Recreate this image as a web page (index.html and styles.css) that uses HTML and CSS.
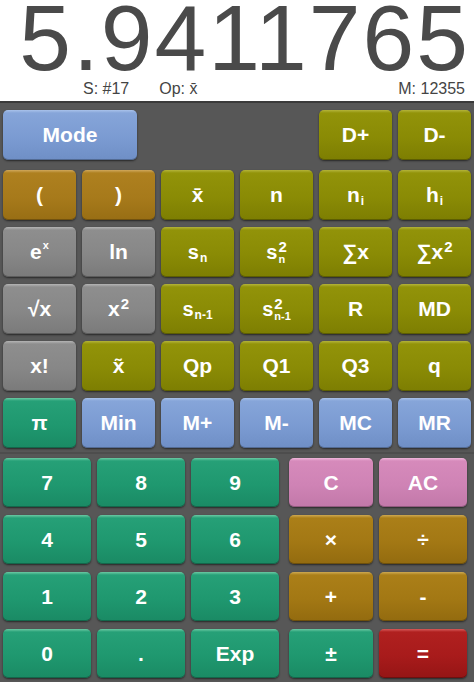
FILE: index.html
```html
<!DOCTYPE html>
<html>
<head>
<meta charset="utf-8">
<link rel="stylesheet" href="styles.css">
</head>
<body>
<div class="display">
  <div class="value">5.9411765</div>
  <div class="status">
    <span class="st-s">S: #17</span>
    <span class="st-op">Op: x̄</span>
    <span class="st-m">M: 12355</span>
  </div>
</div>
<div class="panel">
  <div class="top-row">
    <div class="btn blue mode">Mode</div>
    <div class="spacer"></div>
    <div class="btn olive col">D+</div>
    <div class="btn olive col">D-</div>
  </div>
  <div class="upper">
    <div class="btn brown">(</div>
    <div class="btn brown">)</div>
    <div class="btn olive">x̄</div>
    <div class="btn olive">n</div>
    <div class="btn olive">n<span class="sub">i</span></div>
    <div class="btn olive">h<span class="sub">i</span></div>

    <div class="btn gray">e<span class="sup">x</span></div>
    <div class="btn gray">ln</div>
    <div class="btn olive sm">s<span class="sub">n</span></div>
    <div class="btn olive sm">s<span class="stack"><span>2</span><span>n</span></span></div>
    <div class="btn olive">∑x</div>
    <div class="btn olive">∑x<span class="sup2">2</span></div>

    <div class="btn gray">√x</div>
    <div class="btn gray">x<span class="sup2">2</span></div>
    <div class="btn olive sm">s<span class="sub">n-1</span></div>
    <div class="btn olive sm">s<span class="stack"><span>2</span><span>n-1</span></span></div>
    <div class="btn olive">R</div>
    <div class="btn olive">MD</div>

    <div class="btn gray">x!</div>
    <div class="btn olive">x̃</div>
    <div class="btn olive">Qp</div>
    <div class="btn olive">Q1</div>
    <div class="btn olive">Q3</div>
    <div class="btn olive">q</div>

    <div class="btn green">π</div>
    <div class="btn blue">Min</div>
    <div class="btn blue">M+</div>
    <div class="btn blue">M-</div>
    <div class="btn blue">MC</div>
    <div class="btn blue">MR</div>
  </div>
  <div class="sep"></div>
  <div class="lower">
    <div class="btn green">7</div>
    <div class="btn green">8</div>
    <div class="btn green">9</div>
    <div class="btn pink">C</div>
    <div class="btn pink">AC</div>

    <div class="btn green">4</div>
    <div class="btn green">5</div>
    <div class="btn green">6</div>
    <div class="btn ochre">×</div>
    <div class="btn ochre">÷</div>

    <div class="btn green">1</div>
    <div class="btn green">2</div>
    <div class="btn green">3</div>
    <div class="btn ochre">+</div>
    <div class="btn ochre">-</div>

    <div class="btn green">0</div>
    <div class="btn green">.</div>
    <div class="btn green">Exp</div>
    <div class="btn green">±</div>
    <div class="btn red">=</div>
  </div>
</div>
</body>
</html>
```
FILE: styles.css
```css
html, body {
  margin: 0;
  padding: 0;
  background: #ffffff;
}
body {
  width: 474px;
  height: 682px;
  overflow: hidden;
  font-family: "Liberation Sans", Arial, sans-serif;
}
.display {
  height: 101px;
  background: #ffffff;
  display: flex;
  flex-direction: column;
}
.value {
  height: 76px;
  line-height: 76px;
  font-size: 93px;
  letter-spacing: 2px;
  color: #4a4a4a;
  text-align: right;
  padding-right: 4px;
  white-space: nowrap;
}
.status {
  height: 25px;
  line-height: 25px;
  font-size: 16px;
  color: #444444;
  display: flex;
  padding-left: 83px;
  padding-right: 9px;
}
.st-op {
  margin-left: 30px;
}
.st-m {
  margin-left: auto;
}
.panel {
  height: 581px;
  background: #575757;
  border-top: 2px solid #3a3a3a;
  box-sizing: border-box;
  padding: 7px 3px 0 3px;
}
.top-row {
  display: flex;
  height: 50px;
  gap: 6px;
}
.mode {
  width: 134px;
}
.spacer {
  flex: 1;
}
.col {
  width: 73px;
}
.upper {
  margin-top: 10px;
  display: grid;
  grid-template-columns: repeat(6, 73px);
  grid-auto-rows: 50px;
  column-gap: 6px;
  row-gap: 7px;
}
.sep {
  height: 10px;
  margin: 0 -3px;
  background: linear-gradient(#575757 0, #575757 4px, #4d4d4d 4px, #4d4d4d 6px, #575757 6px);
}
.lower {
  display: grid;
  grid-template-columns: 88px 88px 88px 88px 88px;
  grid-auto-rows: 49px;
  column-gap: 6px;
  row-gap: 8px;
}
.lower .btn:nth-child(5n+4) {
  margin-left: 4px;
}
.btn {
  border-radius: 5px;
  color: #ffffff;
  font-weight: bold;
  font-size: 21px;
  display: flex;
  align-items: center;
  justify-content: center;
  box-shadow: 0 1px 2px rgba(0, 0, 0, 0.55), inset 0 -1px 0 rgba(0, 0, 0, 0.25);
  white-space: nowrap;
}
.sm {
  font-size: 20px;
}
.blue {
  background: linear-gradient(#a9c2ea 0, #86a5d9 3px, #7b9bd2 55%, #6f8fc6 100%);
}
.olive {
  background: linear-gradient(#b4b43a 0, #929309 3px, #8a8b05 55%, #7d7e02 100%);
}
.brown {
  background: linear-gradient(#d0a85c 0, #ae801f 3px, #a77a1b 55%, #986e14 100%);
}
.ochre {
  background: linear-gradient(#cfaa52 0, #ab7f18 3px, #a37814 55%, #936b0f 100%);
}
.gray {
  background: linear-gradient(#b5b5b5 0, #8e8e8e 3px, #878787 55%, #7a7a7a 100%);
}
.green {
  background: linear-gradient(#6ccaa4 0, #26a077 3px, #1f986f 55%, #1a8a64 100%);
}
.pink {
  background: linear-gradient(#f0b8dc 0, #d68abb 3px, #cf83b5 55%, #c278a9 100%);
}
.red {
  background: linear-gradient(#d85a5a 0, #b0201f 3px, #a81b1b 55%, #951515 100%);
}
.sub {
  font-size: 12px;
  position: relative;
  top: 6px;
  margin-left: 1px;
}
.sup {
  font-size: 11px;
  position: relative;
  top: -7px;
  margin-left: 1px;
}
.sup2 {
  font-size: 15px;
  position: relative;
  top: -6px;
  margin-left: 1px;
}
.stack {
  display: inline-flex;
  flex-direction: column;
  align-items: flex-start;
  margin-left: 1px;
  line-height: 12px;
  font-size: 11px;
}
.stack span:first-child {
  font-size: 15px;
  line-height: 13px;
}
```
